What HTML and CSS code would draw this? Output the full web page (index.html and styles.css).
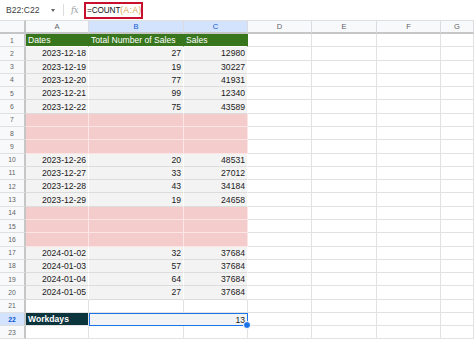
FILE: index.html
```html
<!DOCTYPE html>
<html>
<head>
<meta charset="utf-8">
<link rel="stylesheet" href="styles.css">
</head>
<body>
<div class="toolbar">
  <span class="namebox">B22:C22</span>
  <span class="caret"></span>
  <span class="sep"></span>
  <span class="fx">fx</span>
  <span class="formula">=COUNT<span class="ref">(A:A)</span></span>
</div>
<div class="sheet">
  <div class="corner"></div><div class="ch">A</div><div class="ch sel">B</div><div class="ch sel">C</div><div class="ch">D</div><div class="ch">E</div><div class="ch">F</div><div class="ch">G</div>

  <div class="rh">1</div><div class="c h">Dates</div><div class="c h">Total Number of Sales</div><div class="c h">Sales</div><div class="c"></div><div class="c"></div><div class="c"></div><div class="c"></div>
  <div class="rh">2</div><div class="c g r">2023-12-18</div><div class="c g r">27</div><div class="c g r">12980</div><div class="c"></div><div class="c"></div><div class="c"></div><div class="c"></div>
  <div class="rh">3</div><div class="c g r">2023-12-19</div><div class="c g r">19</div><div class="c g r">30227</div><div class="c"></div><div class="c"></div><div class="c"></div><div class="c"></div>
  <div class="rh">4</div><div class="c g r">2023-12-20</div><div class="c g r">77</div><div class="c g r">41931</div><div class="c"></div><div class="c"></div><div class="c"></div><div class="c"></div>
  <div class="rh">5</div><div class="c g r">2023-12-21</div><div class="c g r">99</div><div class="c g r">12340</div><div class="c"></div><div class="c"></div><div class="c"></div><div class="c"></div>
  <div class="rh">6</div><div class="c g r">2023-12-22</div><div class="c g r">75</div><div class="c g r">43589</div><div class="c"></div><div class="c"></div><div class="c"></div><div class="c"></div>
  <div class="rh">7</div><div class="c p"></div><div class="c p"></div><div class="c p"></div><div class="c"></div><div class="c"></div><div class="c"></div><div class="c"></div>
  <div class="rh">8</div><div class="c p"></div><div class="c p"></div><div class="c p"></div><div class="c"></div><div class="c"></div><div class="c"></div><div class="c"></div>
  <div class="rh">9</div><div class="c p"></div><div class="c p"></div><div class="c p"></div><div class="c"></div><div class="c"></div><div class="c"></div><div class="c"></div>
  <div class="rh">10</div><div class="c g r">2023-12-26</div><div class="c g r">20</div><div class="c g r">48531</div><div class="c"></div><div class="c"></div><div class="c"></div><div class="c"></div>
  <div class="rh">11</div><div class="c g r">2023-12-27</div><div class="c g r">33</div><div class="c g r">27012</div><div class="c"></div><div class="c"></div><div class="c"></div><div class="c"></div>
  <div class="rh">12</div><div class="c g r">2023-12-28</div><div class="c g r">43</div><div class="c g r">34184</div><div class="c"></div><div class="c"></div><div class="c"></div><div class="c"></div>
  <div class="rh">13</div><div class="c g r">2023-12-29</div><div class="c g r">19</div><div class="c g r">24658</div><div class="c"></div><div class="c"></div><div class="c"></div><div class="c"></div>
  <div class="rh">14</div><div class="c p"></div><div class="c p"></div><div class="c p"></div><div class="c"></div><div class="c"></div><div class="c"></div><div class="c"></div>
  <div class="rh">15</div><div class="c p"></div><div class="c p"></div><div class="c p"></div><div class="c"></div><div class="c"></div><div class="c"></div><div class="c"></div>
  <div class="rh">16</div><div class="c p"></div><div class="c p"></div><div class="c p"></div><div class="c"></div><div class="c"></div><div class="c"></div><div class="c"></div>
  <div class="rh">17</div><div class="c g r">2024-01-02</div><div class="c g r">32</div><div class="c g r">37684</div><div class="c"></div><div class="c"></div><div class="c"></div><div class="c"></div>
  <div class="rh">18</div><div class="c g r">2024-01-03</div><div class="c g r">57</div><div class="c g r">37684</div><div class="c"></div><div class="c"></div><div class="c"></div><div class="c"></div>
  <div class="rh">19</div><div class="c g r">2024-01-04</div><div class="c g r">64</div><div class="c g r">37684</div><div class="c"></div><div class="c"></div><div class="c"></div><div class="c"></div>
  <div class="rh">20</div><div class="c g r">2024-01-05</div><div class="c g r">27</div><div class="c g r">37684</div><div class="c"></div><div class="c"></div><div class="c"></div><div class="c"></div>
  <div class="rh">21</div><div class="c"></div><div class="c"></div><div class="c"></div><div class="c"></div><div class="c"></div><div class="c"></div><div class="c"></div>
  <div class="rh selrow">22</div><div class="c dark">Workdays</div><div class="c range r">13<span class="handle"></span></div><div class="c"></div><div class="c"></div><div class="c"></div><div class="c"></div>
  <div class="rh">23</div><div class="c"></div><div class="c"></div><div class="c"></div><div class="c"></div><div class="c"></div><div class="c"></div><div class="c"></div>
</div>
</body>
</html>
```

FILE: styles.css
```css
html, body {
  margin: 0;
  padding: 0;
  background: #ffffff;
  overflow: hidden;
  font-family: "Liberation Sans", Arial, sans-serif;
}

.toolbar {
  height: 20px;
  display: flex;
  align-items: center;
  box-sizing: border-box;
  background: #ffffff;
}

.namebox {
  width: 44px;
  padding-left: 6px;
  font-size: 8.6px;
  color: #3c4043;
}

.caret {
  width: 0;
  height: 0;
  border-left: 2.5px solid transparent;
  border-right: 2.5px solid transparent;
  border-top: 3px solid #5f6368;
  margin-left: 1px;
}

.sep {
  width: 1px;
  height: 12px;
  background: #dadce0;
  margin-left: 8px;
}

.fx {
  margin-left: 7px;
  width: 12px;
  font-family: "DejaVu Serif", serif;
  font-style: italic;
  font-size: 8.5px;
  color: #9aa0a6;
  letter-spacing: -0.5px;
}

.formula {
  margin-left: 1px;
  width: 59px;
  height: 17px;
  box-sizing: border-box;
  border: 2px solid #c8102e;
  font-size: 8.2px;
  color: #111111;
  line-height: 13px;
  padding-left: 1px;
  letter-spacing: -0.1px;
  white-space: nowrap;
}

.ref {
  color: #d8a050;
  letter-spacing: 0.6px;
}

.sheet {
  display: grid;
  grid-template-columns: 26px 63px 95px 64px 64px 65px 64px 1fr;
  grid-template-rows: 14px repeat(23, 13.29px);
}

.corner {
  background: #f8f9fa;
  border-right: 2px solid #c4c7c5;
  border-bottom: 2px solid #c4c7c5;
  box-sizing: border-box;
  border-top: 1px solid #e0e0e0;
}

.ch {
  background: #f8f9fa;
  border-top: 1px solid #e0e0e0;
  border-right: 1px solid #dadce0;
  border-bottom: 2px solid #c4c7c5;
  box-sizing: border-box;
  font-size: 7.5px;
  color: #5f6368;
  display: flex;
  align-items: center;
  justify-content: center;
}

.ch.sel {
  background: #d3e3fd;
  color: #0b57d0;
}

.rh {
  background: #f8f9fa;
  border-right: 2px solid #c4c7c5;
  border-bottom: 1px solid #e0e0e0;
  box-sizing: border-box;
  font-size: 6.8px;
  color: #5f6368;
  display: flex;
  align-items: center;
  justify-content: center;
}

.rh.selrow {
  background: #d3e3fd;
  color: #0b57d0;
  font-weight: bold;
}

.c {
  border-right: 1px solid #e2e2e2;
  border-bottom: 1px solid #e2e2e2;
  box-sizing: border-box;
  font-size: 8.6px;
  color: #1a1a1a;
  display: flex;
  align-items: center;
  padding: 0 2px;
  white-space: nowrap;
  overflow: hidden;
}

.c.r {
  justify-content: flex-end;
}

.c.h {
  background: #38761d;
  color: #ffffff;
  border-right-color: #38761d;
  border-bottom-color: #ffffff;
}

.c.g {
  background: #f3f3f3;
  border-right-color: #ffffff;
  border-bottom-color: #dcdcdc;
}

.c.p {
  background: #f4cccc;
  border-right-color: #fbe5e5;
  border-bottom-color: #fbe5e5;
}

.c.dark {
  background: #0c343d;
  color: #ffffff;
  font-weight: bold;
  padding-left: 2px;
}

.c.range {
  grid-column: span 2;
  background: #f1f3f4;
  border: 1.5px solid #1a73e8;
  position: relative;
  overflow: visible;
}

.handle {
  position: absolute;
  right: -4px;
  bottom: -4px;
  width: 6px;
  height: 6px;
  border-radius: 50%;
  background: #1a73e8;
  border: 1px solid #ffffff;
  box-sizing: content-box;
  z-index: 2;
}
```
